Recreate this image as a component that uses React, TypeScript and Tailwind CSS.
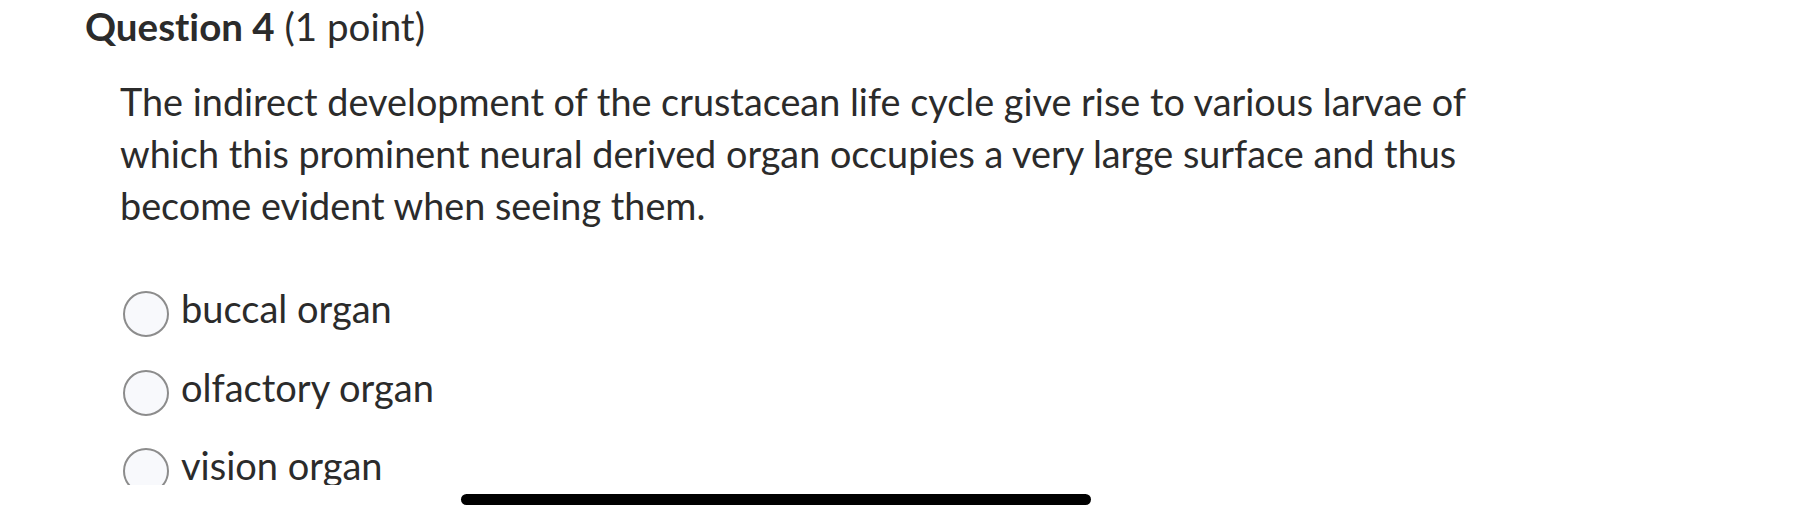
import React from "react";

const options = ["buccal organ", "olfactory organ", "vision organ"];

export default function App() {
  return (
    <div
      className="w-[1799px] h-[520px] bg-white overflow-hidden text-[#2b2b2b] [font-variant-ligatures:none]"
      style={{ fontFamily: "Lato, 'Noto Sans', sans-serif" }}
    >
      <div className="h-[485px] overflow-hidden">
        <h1 className="pl-[85px] pt-[3px] text-[38.5px] leading-[46px]">
          <span className="font-bold">Question 4</span>{" "}
          <span className="font-normal">(1 point)</span>
        </h1>
        <div className="pl-[120px]">
          <p className="mt-[27.4px] w-[1380px] text-[37.8px] leading-[52px]">
            The indirect development of the crustacean life cycle give rise to various larvae of which this
            prominent neural derived organ occupies a very large surface and thus become evident when seeing
            them.
          </p>
          <div className="mt-[53px] flex flex-col gap-[26.8px]">
            {options.map((o) => (
              <label key={o} className="flex items-start gap-[12px]">
                <span className="ml-[3px] mt-[5.7px] w-[46px] h-[46px] shrink-0 rounded-full border-2 border-[#8c8c8c] bg-[#f8f9fc]" />
                <span className="text-[38px] leading-[46px]">{o}</span>
              </label>
            ))}
          </div>
        </div>
      </div>
      <div className="mt-[9px] ml-[461px] w-[630px] h-[11px] rounded-full bg-black" />
    </div>
  );
}
